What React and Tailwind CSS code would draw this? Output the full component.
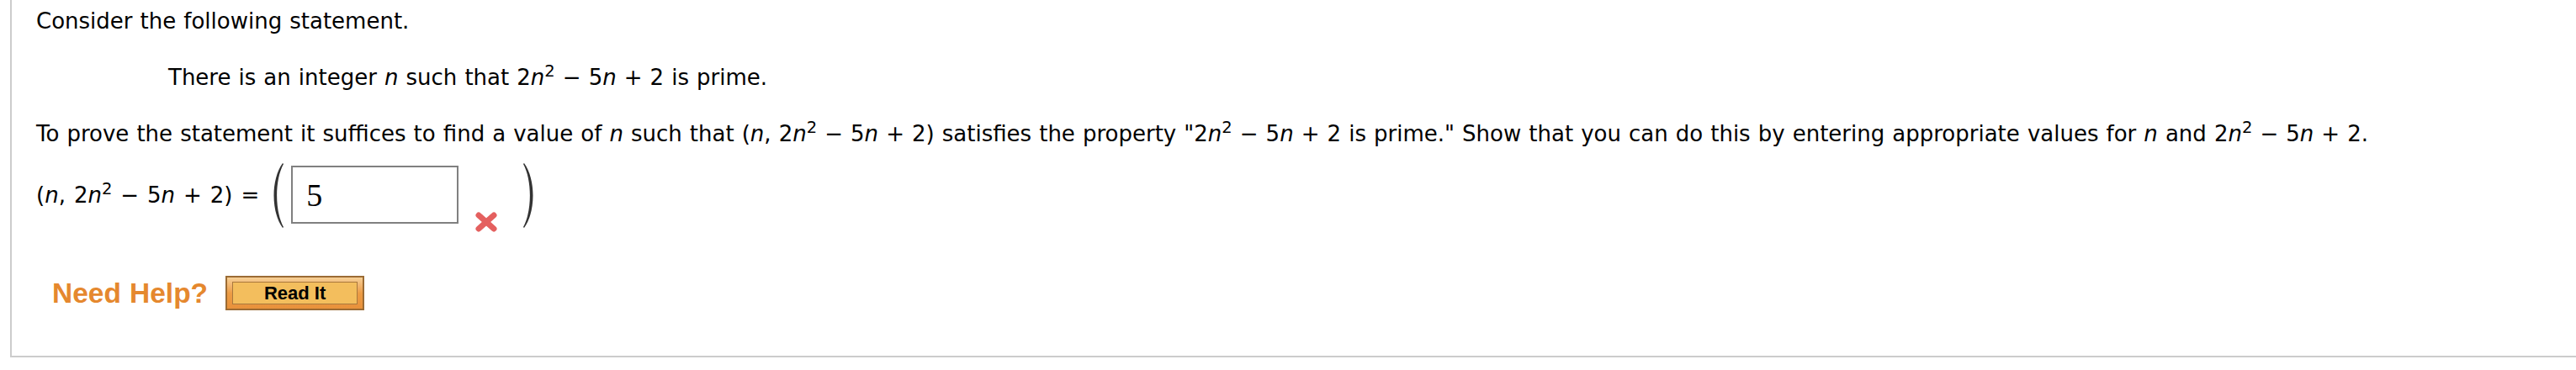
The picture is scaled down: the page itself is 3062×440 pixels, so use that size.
import React from "react";

const sans = { fontFamily: '"DejaVu Sans", Verdana, sans-serif' };

function Expr() {
  return (
    <>
      2<i>n</i>
      <sup>2</sup> − 5<i>n</i> + 2
    </>
  );
}

function Paren({ right }) {
  return (
    <svg width="18" height="79" viewBox="0 0 18 79" className={right ? "-scale-x-100" : ""}>
      <path d="M16 1 C2 20 2 59 16 78 L17 77 C6.5 58 6.5 21 17 2 Z" fill="#333" />
    </svg>
  );
}

function WrongMark() {
  return (
    <svg width="28" height="26" viewBox="0 0 28 26">
      <path d="M5 5 L23 21 M23 5 L5 21" stroke="#e4605f" strokeWidth="7" strokeLinecap="round" />
    </svg>
  );
}

export default function App() {
  return (
    <div className="w-full h-[440px] bg-white">
      <div
        className="ml-[12px] h-[425px] border-l-2 border-b-2 border-[#cccccc] pl-[29px] text-[26px] leading-[30px] text-black [word-spacing:0.8px]"
        style={sans}
      >
        <p className="pt-[10px]">Consider the following statement.</p>
        <p className="mt-[37px] pl-[157px]">
          There is an integer <i>n</i> such that <Expr /> is prime.
        </p>
        <p className="mt-[37px] whitespace-nowrap">
          To prove the statement it suffices to find a value of <i>n</i> such that (<i>n</i>, <Expr />) satisfies the
          property "<Expr /> is prime." Show that you can do this by entering appropriate values for <i>n</i> and{" "}
          <Expr />.
        </p>

        <div className="mt-[19px] flex items-start">
          <span className="mt-[24px] whitespace-nowrap [word-spacing:1.7px]">
            (<i>n</i>, <Expr />) =
          </span>
          <div className="ml-[12px]">
            <Paren />
          </div>
          <div className="ml-[8px] mt-[4px] w-[199px] h-[69px] border-2 border-[#808080] bg-white flex items-center pl-[16px]">
            <span className="text-[38px] leading-none" style={{ fontFamily: '"Liberation Serif", "Times New Roman", serif' }}>
              5
            </span>
          </div>
          <div className="ml-[19px] mt-[58px]">
            <WrongMark />
          </div>
          <div className="ml-[29px]">
            <Paren right />
          </div>
        </div>

        <div className="mt-[51px] pl-[19px] flex items-center" style={{ fontFamily: '"Liberation Sans", Arial, sans-serif' }}>
          <span className="text-[33.5px] font-bold text-[#e5882e] leading-none">Need Help?</span>
          <button className="ml-[21px] w-[165px] h-[41px] border-2 border-[#9b6b34] bg-linear-to-b from-[#f6cf95] via-[#ec9c45] to-[#e8913b] px-[6px] py-[5px] flex">
            <span className="flex-1 border border-[#a9783d] bg-[#f3be5d] flex items-center justify-center text-[22px] font-bold text-black leading-none">
              Read It
            </span>
          </button>
        </div>
      </div>
    </div>
  );
}
